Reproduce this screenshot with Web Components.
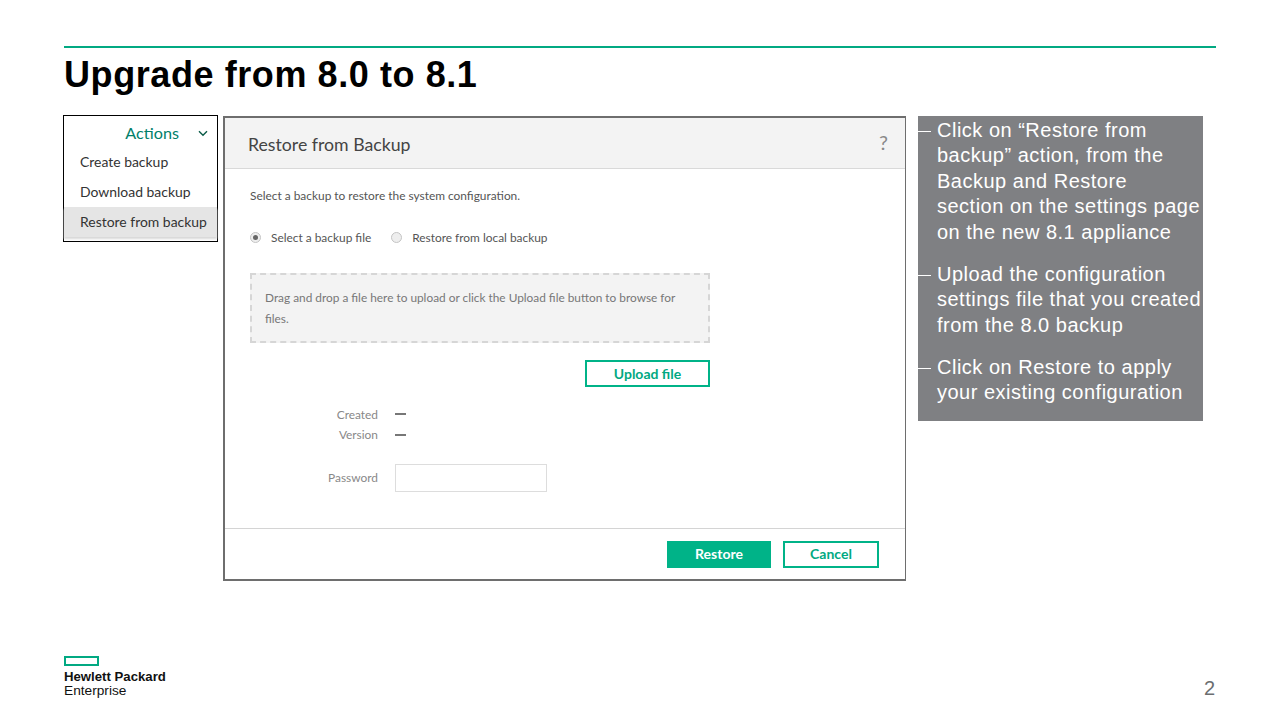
<!DOCTYPE html>
<html lang="en">
<head>
<meta charset="utf-8">
<title>Upgrade from 8.0 to 8.1</title>
<style>
  html, body { margin: 0; padding: 0; background: #fff; }
  body { width: 1280px; height: 720px; overflow: hidden; font-family: "Liberation Sans", Arial, sans-serif; }
</style>
</head>
<body>
<slide-page>
  <span slot="title">Upgrade from 8.0 to 8.1</span>
  <actions-menu slot="menu"></actions-menu>
  <restore-dialog slot="dialog"></restore-dialog>
  <step-notes slot="notes"></step-notes>
  <hpe-logo slot="logo"></hpe-logo>
  <span slot="page">2</span>
</slide-page>

<script>
class SlidePage extends HTMLElement {
  constructor() {
    super();
    this.attachShadow({ mode: "open" });
    this.shadowRoot.innerHTML = `
      <style>
        :host { display: flex; flex-direction: column; width: 1280px; height: 720px; box-sizing: border-box; padding: 46px 64px 0; }
        #rule { height: 2px; background: #01a982; }
        h1 { margin: 6px 0 0; height: 41px; font: bold 36px/41px "Liberation Sans", Arial, sans-serif; letter-spacing: 0.58px; color: #000; }
        #main { display: flex; align-items: flex-start; margin: 20px 0 0 -1px; height: 541px; }
        #menu { width: 155px; flex: none; }
        #dialog { margin-left: 5px; margin-top: 1px; flex: none; }
        #notes { margin-left: 12px; margin-top: 1px; flex: none; }
        #foot { display: flex; justify-content: space-between; align-items: flex-end; height: 44px; }
        #foot ::slotted(hpe-logo) { align-self: flex-start; }
        #page { font-size: 20px; line-height: 23px; color: #6b6e70; margin-right: 1px; }
      </style>
      <div id="rule"></div>
      <h1><slot name="title"></slot></h1>
      <div id="main">
        <div id="menu"><slot name="menu"></slot></div>
        <div id="dialog"><slot name="dialog"></slot></div>
        <div id="notes"><slot name="notes"></slot></div>
      </div>
      <div id="foot">
        <slot name="logo"></slot>
        <div id="page"><slot name="page"></slot></div>
      </div>`;
  }
}

class ActionsMenu extends HTMLElement {
  constructor() {
    super();
    this.attachShadow({ mode: "open" });
    this.shadowRoot.innerHTML = `
      <style>
        :host { display: block; box-sizing: border-box; width: 155px; height: 127px; border: 1px solid #000; font-family: Lato, "Open Sans", sans-serif; }
        #head { display: flex; justify-content: flex-end; align-items: center; height: 31px; padding: 2px 9px 0 0; box-sizing: border-box; color: #01806a; font-size: 16.2px; }
        #head svg { margin-left: 19px; margin-top: 2px; }
        .item { height: 30px; line-height: 30px; padding-left: 16px; font-size: 13.95px; color: #333; }
        .item.on { background: #e5e5e5; box-shadow: 0 2px 2px #d8d8d8; }
      </style>
      <div id="head">Actions
        <svg width="10" height="7" viewBox="0 0 10 7"><path d="M1 1.2 L5 5.2 L9 1.2" fill="none" stroke="#0b5b48" stroke-width="1.4"/></svg>
      </div>
      <div class="item">Create backup</div>
      <div class="item">Download backup</div>
      <div class="item on">Restore from backup</div>`;
  }
}

class RestoreDialog extends HTMLElement {
  constructor() {
    super();
    this.attachShadow({ mode: "open" });
    this.shadowRoot.innerHTML = `
      <style>
        :host { display: flex; flex-direction: column; box-sizing: border-box; width: 683px; height: 465px; border: 2px solid #6e6e6e; border-width: 2px 1px 2px 2px; font-family: Lato, "Open Sans", sans-serif; color: #666; background: #fff; }
        #head { display: flex; justify-content: space-between; align-items: center; box-sizing: border-box; height: 51px; padding: 2px 17px 0 23px; background: #f3f3f3; border-bottom: 1px solid #d9d9d9; flex: none; }
        #head h2 { margin: 0; font-weight: 400; font-size: 17.7px; color: #444; }
        #head span { font-size: 20px; color: #888; padding-bottom: 5px; }
        #body { flex: 1; padding: 19px 25px 0; font-size: 11.9px; }
        #lead { height: 16px; line-height: 16px; color: #555; }
        #radios { display: flex; align-items: center; height: 16px; margin-top: 25px; color: #555; }
        .radio { width: 11px; height: 11px; box-sizing: border-box; border-radius: 50%; border: 1px solid #c4c4c4; background: #eee; margin-right: 10px; display: flex; align-items: center; justify-content: center; }
        .radio.on::after { content: ""; width: 5px; height: 5px; border-radius: 50%; background: #666; }
        #radios label + .radio { margin-left: 20px; }
        #drop { box-sizing: border-box; width: 460px; height: 70px; margin-top: 28px; padding: 13px 13px; background: #f3f3f3; border: 2px dashed #d6d6d6; line-height: 20.5px; color: #777; font-size: 11.85px; }
        #upload { display: flex; justify-content: flex-end; width: 460px; margin-top: 17px; }
        .btn { box-sizing: border-box; border: 2px solid #00b388; background: #fff; color: #01a982; font-weight: 700; font-size: 14px; display: flex; align-items: center; justify-content: center; }
        #upload .btn { width: 125px; height: 27px; }
        #fields { display: grid; grid-template-columns: 128px auto; column-gap: 17px; grid-auto-rows: 20.5px; margin-top: 17px; align-items: center; }
        #fields .k { text-align: right; color: #888; }
        #fields .v { width: 11px; height: 2px; background: #777; }
        #pw-row { display: flex; align-items: center; margin-top: 19px; }
        #pw-row .k { width: 128px; text-align: right; color: #888; padding-bottom: 2px; }
        #pw-row .box { margin-left: 17px; width: 152px; height: 28px; box-sizing: border-box; border: 1px solid #ddd; }
        #foot { display: flex; justify-content: flex-end; align-items: center; flex: none; height: 51px; border-top: 1px solid #d4d4d4; padding-right: 26px; box-sizing: border-box; }
        #foot .btn { height: 27px; padding-bottom: 2px; }
        #restore { width: 104px; background: #00b388; color: #fff; margin-right: 12px; }
        #cancel { width: 96px; }
      </style>
      <div id="head"><h2>Restore from Backup</h2><span>?</span></div>
      <div id="body">
        <div id="lead">Select a backup to restore the system configuration.</div>
        <div id="radios">
          <div class="radio on"></div><label>Select a backup file</label>
          <div class="radio"></div><label>Restore from local backup</label>
        </div>
        <div id="drop">Drag and drop a file here to upload or click the Upload file button to browse for files.</div>
        <div id="upload"><div class="btn">Upload file</div></div>
        <div id="fields">
          <div class="k">Created</div><div class="v"></div>
          <div class="k">Version</div><div class="v"></div>
        </div>
        <div id="pw-row"><div class="k">Password</div><div class="box"></div></div>
      </div>
      <div id="foot"><div class="btn" id="restore">Restore</div><div class="btn" id="cancel">Cancel</div></div>`;
  }
}

class StepNotes extends HTMLElement {
  constructor() {
    super();
    this.attachShadow({ mode: "open" });
    const steps = [
      ["Click on “Restore from", "backup” action, from the", "Backup and Restore", "section on the settings page", "on the new 8.1 appliance"],
      ["Upload the configuration", "settings file that you created", "from the 8.0 backup"],
      ["Click on Restore to apply", "your existing configuration"]
    ];
    this.shadowRoot.innerHTML = `
      <style>
        :host { display: block; box-sizing: border-box; width: 285px; height: 305px; background: #7f8083; color: #fff; font: 20px/25.5px "Liberation Sans", Arial, sans-serif; letter-spacing: 0.5px; padding-top: 1.7px; white-space: nowrap; }
        .step { position: relative; padding-left: 19px; margin-bottom: 16.5px; }
        .step::before { content: ""; position: absolute; left: 0; top: 13px; width: 13px; height: 1px; background: #fff; }
      </style>
      ${steps.map(s => `<div class="step">${s.join("<br>")}</div>`).join("")}`;
  }
}

class HpeLogo extends HTMLElement {
  constructor() {
    super();
    this.attachShadow({ mode: "open" });
    this.shadowRoot.innerHTML = `
      <style>
        :host { display: block; color: #111; font-family: "Liberation Sans", Arial, sans-serif; }
        #mark { box-sizing: border-box; width: 35px; height: 10px; border: 2px solid #01a982; margin-bottom: 4px; }
        #a { font-weight: 700; font-size: 13.2px; line-height: 14px; }
        #b { font-size: 13.7px; line-height: 13px; }
      </style>
      <div id="mark"></div>
      <div id="a">Hewlett Packard</div>
      <div id="b">Enterprise</div>`;
  }
}

customElements.define("slide-page", SlidePage);
customElements.define("actions-menu", ActionsMenu);
customElements.define("restore-dialog", RestoreDialog);
customElements.define("step-notes", StepNotes);
customElements.define("hpe-logo", HpeLogo);
</script>
</body>
</html>
